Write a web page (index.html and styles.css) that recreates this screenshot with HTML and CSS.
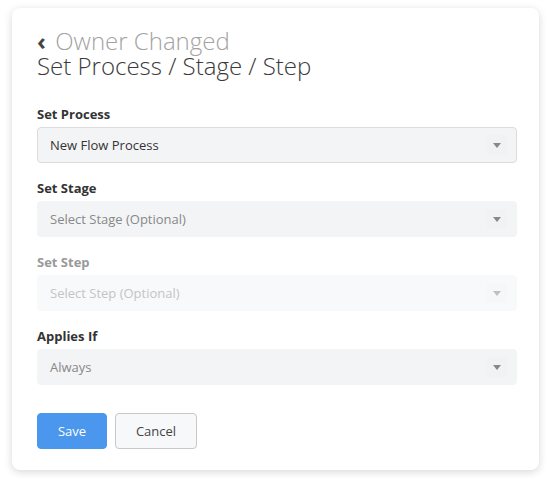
FILE: index.html
```html
<!DOCTYPE html>
<html lang="en">
<head>
    <meta charset="UTF-8">
    <title>Set Process / Stage / Step</title>
    <link rel="stylesheet" href="styles.css">
</head>
<body>
    <section class="card">
        <div class="title">
            <div class="back"><span class="chev">&#8249;</span> Owner Changed</div>
            <div class="main">Set Process / Stage / Step</div>
        </div>

        <div class="field">
            <label>Set Process</label>
            <div class="select bordered"><span class="value">New Flow Process</span><span class="arrow"></span></div>
        </div>
        <div class="field">
            <label>Set Stage</label>
            <div class="select"><span class="value placeholder">Select Stage (Optional)</span><span class="arrow"></span></div>
        </div>
        <div class="field disabled">
            <label>Set Step</label>
            <div class="select"><span class="value">Select Step (Optional)</span><span class="arrow"></span></div>
        </div>
        <div class="field">
            <label>Applies If</label>
            <div class="select"><span class="value placeholder">Always</span><span class="arrow"></span></div>
        </div>

        <div class="actions">
            <button class="btn primary">Save</button>
            <button class="btn">Cancel</button>
        </div>
    </section>
</body>
</html>
```

FILE: styles.css
```css
body { margin: 0; padding: 8px 12px; font-family: 'Open Sans', 'Noto Sans', sans-serif; color: #333; background: #fff; }
.card { width: 527px; box-sizing: border-box; padding: 20px 22px 21px 25px; background: #fff; border-radius: 8px; box-shadow: 0 2px 8px rgba(0,0,0,0.16); }
.title { font-size: 24px; font-weight: 300; line-height: 25px; margin-bottom: 27px; }
.back { color: #a3a3a3; }
.chev { display: inline-block; width: 12px; font-weight: 700; color: #444; font-size: 24px; line-height: 25px; }
.main { color: #3a3a3a; }
.field { margin-bottom: 16px; }
.field label { display: block; font-size: 13px; font-weight: 700; line-height: 18px; margin-bottom: 4px; color: #333; }
.select { position: relative; display: flex; align-items: center; height: 36px; box-sizing: border-box; padding: 0 12px; background: #f3f4f6; border: 1px solid #f3f4f6; border-radius: 4px; font-size: 13px; }
.select.bordered { border-color: #dcdcdc; }
.value { color: #333; }
.value.placeholder { color: #888; }
.arrow { position: absolute; right: 9px; top: 7px; width: 20px; height: 20px; background: rgba(0,0,0,0.008); }
.arrow::after { content: ""; position: absolute; left: 6px; top: 8px; border-left: 4px solid transparent; border-right: 4px solid transparent; border-top: 5px solid #888; }
.disabled label { color: #999; }
.disabled .select { background: #f8f9fa; border-color: #f8f9fa; }
.disabled .value { color: #c4c4c4; }
.disabled .arrow::after { border-top-color: #c0c0c0; }
.actions { display: flex; gap: 8px; margin-top: 28px; }
.btn { height: 36px; padding: 0; font-family: inherit; font-size: 13px; border-radius: 4px; cursor: pointer; width: 82px; background: #f7f8fa; border: 1px solid #c8c8c8; color: #444; }
.btn.primary { width: 70px; background: #4b97ed; border-color: #4b97ed; color: #fff; }
```
